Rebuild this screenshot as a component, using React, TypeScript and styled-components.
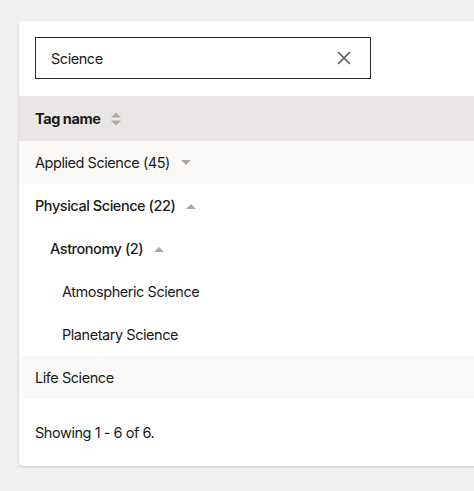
import React, { useState } from 'react';
import styled, { createGlobalStyle } from 'styled-components';

const GlobalStyle = createGlobalStyle`
body {
	margin: 0;
	background: #f1f0ef;
	font-family: Inter, "Noto Sans", sans-serif;
	color: #1c1b1a;
	overflow: hidden;
}
`;

const Page = styled.div`
padding: 21px 0 0 19px;
height: 491px;
box-sizing: border-box;
`;

const Card = styled.div`
width: 520px;
background: #ffffff;
border-radius: 4px;
box-shadow: 0 1px 3px rgba(0, 0, 0, 0.18);
padding-top: 16px;
font-size: 14.5px;
letter-spacing: -0.45px;
`;

const SearchBox = styled.div`
display: flex;
align-items: center;
margin-left: 16px;
width: 336px;
height: 42px;
box-sizing: border-box;
border: 1.5px solid #2b2a29;
padding: 0 19px 0 15px;
`;

const SearchInput = styled.input`
flex-grow: 1;
border: none;
outline: none;
font-family: inherit;
font-size: 14.5px;
letter-spacing: -0.45px;
color: #1c1b1a;
background: transparent;
padding: 0;
`;

const ClearButton = styled.button`
display: flex;
border: none;
background: none;
padding: 0;
cursor: pointer;
`;

const Table = styled.div`
margin-top: 17px;
`;

const HeaderRow = styled.div`
display: flex;
align-items: center;
height: 45px;
padding-left: 16px;
background: #e9e6e5;
font-weight: 700;
gap: 11px;
`;

const Row = styled.div<{ $shaded: boolean; $level: number; $bold: boolean }>`
display: flex;
align-items: center;
height: 43px;
padding-left: ${p => 16 + [0, 15, 27][p.$level]}px;
background: ${p => (p.$shaded ? '#faf9f8' : '#ffffff')};
font-weight: ${p => (p.$bold ? 500 : 400)};
gap: 11px;
`;

const Footer = styled.div`
display: flex;
align-items: center;
height: 67px;
padding-left: 16px;
`;

const Caret = ({ up }: { up: boolean }) => (
	<svg width="10" height="6" viewBox="0 0 10 6">
		<path d={up ? 'M0 6 L5 1 L10 6 Z' : 'M0 0 L10 0 L5 5 Z'} fill="#aaa7a5" />
	</svg>
);

const SortIcon = () => (
	<svg width="10" height="16" viewBox="0 0 10 16">
		<path d="M0 6.5 L5 1.5 L10 6.5 Z" fill="#aaa7a5" />
		<path d="M0 9.5 L10 9.5 L5 14.5 Z" fill="#aaa7a5" />
	</svg>
);

const XIcon = () => (
	<svg width="14" height="14" viewBox="0 0 14 14">
		<path d="M1 1 L13 13 M13 1 L1 13" stroke="#5a5958" strokeWidth="1.6" />
	</svg>
);

const rows = [
	{ name: 'Applied Science (45)', level: 0, caret: 'down', bold: false, shaded: true },
	{ name: 'Physical Science (22)', level: 0, caret: 'up', bold: true, shaded: false },
	{ name: 'Astronomy (2)', level: 1, caret: 'up', bold: true, shaded: false },
	{ name: 'Atmospheric Science', level: 2, caret: '', bold: false, shaded: false },
	{ name: 'Planetary Science', level: 2, caret: '', bold: false, shaded: false },
	{ name: 'Life Science', level: 0, caret: '', bold: false, shaded: true },
];

const App: React.FC = () => {
	const [query, setQuery] = useState('Science');

	return (
		<>
			<GlobalStyle />
			<Page>
				<Card>
					<SearchBox>
						<SearchInput value={query} onChange={e => setQuery(e.target.value)} />
						<ClearButton onClick={() => setQuery('')}>
							<XIcon />
						</ClearButton>
					</SearchBox>
					<Table>
						<HeaderRow>
							Tag name
							<SortIcon />
						</HeaderRow>
						{rows.map(r => (
							<Row key={r.name} $shaded={r.shaded} $level={r.level} $bold={r.bold}>
								{r.name}
								{r.caret && <Caret up={r.caret === 'up'} />}
							</Row>
						))}
					</Table>
					<Footer>Showing 1 - 6 of 6.</Footer>
				</Card>
			</Page>
		</>
	);
};

export default App;
